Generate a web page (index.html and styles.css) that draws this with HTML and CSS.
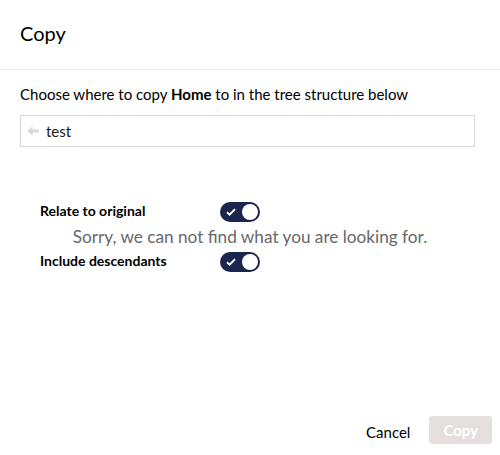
FILE: index.html
```html
<!DOCTYPE html>
<html lang="en">

<head>
    <meta charset="UTF-8">
    <meta name="viewport" content="width=device-width, initial-scale=1.0">
    <title>Copy</title>
    <link rel="stylesheet" href="styles.css">
</head>

<body>
    <div class="dialog">
        <div class="dialog-header">
            <h1 class="dialog-title">Copy</h1>
        </div>

        <div class="dialog-body">
            <p class="intro">Choose where to copy <strong>Home</strong> to in the tree structure below</p>

            <div class="tree-search">
                <svg class="back-icon" width="12" height="10" viewBox="0 0 12 10">
                    <path d="M0 5 L5.5 0.5 L5.5 3.4 L12 3.4 L12 6.6 L5.5 6.6 L5.5 9.5 Z" fill="#d8d7d9" />
                </svg>
                <span class="crumb">test</span>
            </div>

            <div class="options">
                <div class="option-row">
                    <span class="option-label">Relate to original</span>
                    <span class="toggle">
                        <svg class="toggle-check" width="10" height="8" viewBox="0 0 10 8">
                            <path d="M1 4.2 L3.6 6.6 L9 1.2" fill="none" stroke="#fff" stroke-width="1.9" />
                        </svg>
                        <span class="toggle-knob"></span>
                    </span>
                </div>

                <div class="no-results">Sorry, we can not find what you are looking for.</div>

                <div class="option-row">
                    <span class="option-label">Include descendants</span>
                    <span class="toggle">
                        <svg class="toggle-check" width="10" height="8" viewBox="0 0 10 8">
                            <path d="M1 4.2 L3.6 6.6 L9 1.2" fill="none" stroke="#fff" stroke-width="1.9" />
                        </svg>
                        <span class="toggle-knob"></span>
                    </span>
                </div>
            </div>
        </div>

        <div class="dialog-footer">
            <button class="btn btn-link" type="button">Cancel</button>
            <button class="btn btn-primary" type="button" disabled>Copy</button>
        </div>
    </div>
</body>

</html>
```

FILE: styles.css
```css
body {
    font-family: Lato, "Open Sans", sans-serif;
    color: #000;
    background-color: #fff;
    margin: 0;
    padding: 0;
}

.dialog {
    display: flex;
    flex-direction: column;
    height: 455px;
}

.dialog-header {
    height: 70px;
    box-sizing: border-box;
    padding: 21px 20px 0;
    border-bottom: 1px solid #e9e9eb;
}

.dialog-title {
    margin: 0;
    font-size: 20px;
    font-weight: 400;
    line-height: 24px;
}

.dialog-body {
    padding: 14px 25px 0 20px;
}

.intro {
    margin: 0;
    font-size: 15px;
    line-height: 20px;
}

.intro strong {
    font-weight: 700;
}

.tree-search {
    display: flex;
    align-items: center;
    height: 32px;
    margin-top: 11px;
    padding: 0 6px;
    border: 1px solid #d8d7d9;
    box-sizing: border-box;
}

.back-icon {
    margin-right: 7px;
}

.crumb {
    font-size: 15px;
    color: #1b1b1f;
}

.options {
    margin-top: 55px;
    padding-left: 20px;
}

.option-row {
    display: flex;
    align-items: center;
    height: 20px;
}

.option-label {
    width: 180px;
    font-size: 14px;
    font-weight: 700;
    line-height: 18px;
    margin-top: -2px;
}

.toggle {
    position: relative;
    display: flex;
    align-items: center;
    width: 40px;
    height: 20px;
    border-radius: 10px;
    background-color: #1b264f;
}

.toggle-check {
    margin-left: 6px;
}

.toggle-knob {
    position: absolute;
    top: 2px;
    right: 2px;
    width: 16px;
    height: 16px;
    border-radius: 50%;
    background-color: #fff;
}

.no-results {
    margin-left: -40px;
    margin-right: -25px;
    text-align: center;
    font-size: 17.2px;
    line-height: 30px;
    color: #68676b;
}

.dialog-footer {
    margin-top: auto;
    display: flex;
    justify-content: flex-end;
    align-items: center;
    gap: 5px;
    padding: 0 8px 11px 0;
}

.btn {
    font-family: Lato, "Open Sans", sans-serif;
    font-size: 15px;
    height: 28px;
    padding: 0 14px;
    border: none;
    border-radius: 3px;
    background: none;
}

.btn-link {
    color: #000;
    padding-top: 3px;
}

.btn-primary {
    font-weight: 700;
    color: #fff;
    background-color: #e5dfdd;
}
```
